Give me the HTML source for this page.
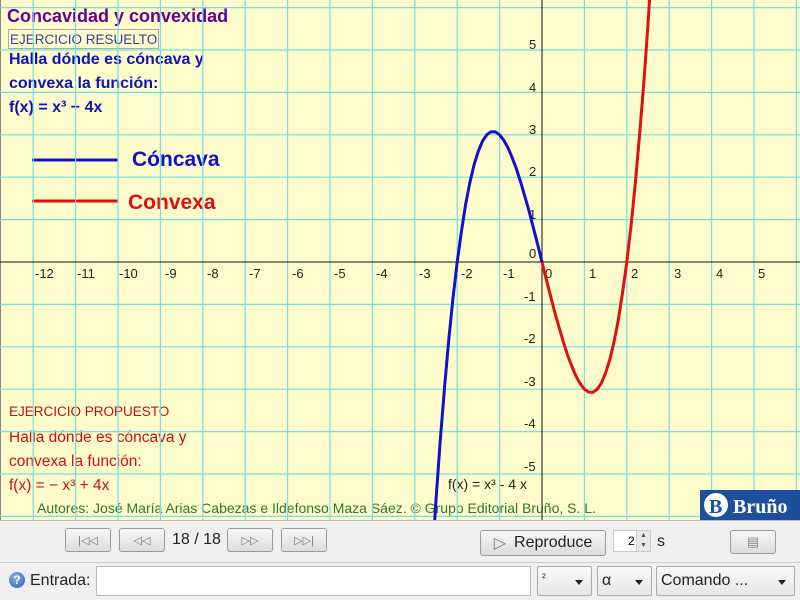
<!DOCTYPE html>
<html><head><meta charset="utf-8"><style>
*{margin:0;padding:0;box-sizing:border-box}
body{width:800px;height:600px;overflow:hidden;background:#f0f0f0;font-family:"Liberation Sans",sans-serif;position:relative}
.btn{position:absolute;height:24px;border:1px solid #9a9a9a;border-radius:3px;background:linear-gradient(#f8f8f8,#dcdcdc);font-size:15px;color:#222;display:flex;align-items:center;justify-content:center}
.sel{position:absolute;top:566px;height:30px;border:1px solid #aaa;border-radius:2px;background:linear-gradient(#fafafa,#e6e6e6);font-size:16px;color:#222;padding-left:4px;display:flex;align-items:center}
.sel:after{content:"";position:absolute;right:8px;top:13px;border:4px solid transparent;border-top:5px solid #222}
</style></head><body>
<svg width="800" height="520" style="position:absolute;left:0;top:0" font-family="Liberation Sans, sans-serif">
<rect width="800" height="520" fill="#fffccc"/>
<line x1="0.5" y1="0" x2="0.5" y2="520" stroke="#888"/>
<text x="7" y="22" font-size="18" font-weight="bold" fill="#660099">Concavidad y convexidad</text>
<rect x="8.5" y="29.5" width="150" height="19" fill="none" stroke="#aaa"/>
<text x="10" y="44" font-size="13.5" fill="#3a3aa0">EJERCICIO RESUELTO</text>
<g font-size="16" font-weight="bold" fill="#1111bb">
<text x="9" y="64">Halla dónde es cóncava y</text>
<text x="9" y="88">convexa la función:</text>
<text x="9" y="112">f(x) = x³ − 4x</text>
</g>
<line x1="32" y1="160" x2="118" y2="160" stroke="#1111cc" stroke-width="3"/>
<text x="132" y="166" font-size="21" font-weight="bold" fill="#1111cc">Cóncava</text>
<line x1="32" y1="201" x2="118" y2="201" stroke="#dd1111" stroke-width="3"/>
<text x="128" y="209" font-size="21" font-weight="bold" fill="#dd1111">Convexa</text>
<text x="9" y="416" font-size="13.5" fill="#bb1111">EJERCICIO PROPUESTO</text>
<g font-size="15.5" fill="#cc1111">
<text x="9" y="442">Halla dónde es cóncava y</text>
<text x="9" y="466">convexa la función:</text>
<text x="9" y="490">f(x) = − x³ + 4x</text>
</g>
<text x="37" y="513" font-size="14" fill="#2a7a2a">Autores: José María Arias Cabezas e Ildefonso Maza Sáez. © Grupo Editorial Bruño, S. L.</text>
<text x="448" y="489" font-size="14" fill="#222">f(x) = x³ - 4 x</text>
<g stroke="#70e0e0" stroke-width="1.2">
<path d="M33.2 0V520M75.6 0V520M118 0V520M160.4 0V520M202.8 0V520M245.2 0V520M287.6 0V520M330 0V520M372.4 0V520M414.8 0V520M457.2 0V520M499.6 0V520M584.4 0V520M626.8 0V520M669.2 0V520M711.6 0V520M754 0V520M796.4 0V520"/>
<path d="M0 7.6H800M0 50H800M0 92.4H800M0 134.8H800M0 177.2H800M0 219.6H800M0 304.4H800M0 346.8H800M0 389.2H800M0 431.6H800M0 474H800M0 516.4H800"/>
</g>
<line x1="0" y1="262" x2="800" y2="262" stroke="#111"/>
<line x1="542" y1="0" x2="542" y2="520" stroke="#111"/>
<g font-size="13" fill="#222">
<text x="35" y="278">-12</text><text x="77" y="278">-11</text><text x="119" y="278">-10</text><text x="165" y="278">-9</text><text x="207" y="278">-8</text><text x="249" y="278">-7</text><text x="292" y="278">-6</text><text x="334" y="278">-5</text><text x="376" y="278">-4</text><text x="419" y="278">-3</text><text x="461" y="278">-2</text><text x="503" y="278">-1</text><text x="545" y="278">0</text><text x="589" y="278">1</text><text x="631" y="278">2</text><text x="674" y="278">3</text><text x="716" y="278">4</text><text x="758" y="278">5</text>
<text x="529" y="49">5</text><text x="529" y="92">4</text><text x="529" y="134">3</text><text x="529" y="176">2</text><text x="529" y="219">1</text><text x="529" y="258">0</text>
<text x="524" y="301">-1</text><text x="524" y="343">-2</text><text x="524" y="386">-3</text><text x="524" y="428">-4</text><text x="524" y="471">-5</text>
</g>
<polyline fill="none" stroke="#1111cc" stroke-width="3" stroke-linejoin="round" points="431.8,566.3 436,500 440.2,441.1 444.5,388 448.7,340.4 453,298 457.2,262 461.5,231 465.7,204 470,182 474.2,164.3 478.4,151 482.6,140.9 486.9,134.6 491.1,131.7 495.4,131.9 499.6,134.8 503.9,140.5 508.1,148 512.3,158 516.6,169.4 520.8,182.5 525,196.9 529.3,212 533.5,228.4 537.8,245 542,262"/>
<polyline fill="none" stroke="#dd1111" stroke-width="3" stroke-linejoin="round" points="542,262 546.2,279 550.5,295.6 554.7,312 559,327.1 563.2,341.5 567.4,354.6 571.7,366 575.9,376 580.1,383.5 584.4,389.2 588.6,392.1 592.9,392.3 597.1,389.4 601.4,383.1 605.6,373 609.8,359.7 614,342 618.3,320 622.5,293 626.8,262 631,226 635.3,183.6 639.5,136 643.8,82.9 648,24 652.2,-42.3"/>
<rect x="700" y="490" width="100" height="30" fill="#1d4f9a"/>
<circle cx="716" cy="505" r="12" fill="#fff"/>
<text x="709" y="513" font-size="20" font-weight="bold" fill="#1d4f9a" font-family="Liberation Serif, serif">B</text>
<text x="733" y="513" font-size="20" font-weight="bold" fill="#fff" font-family="Liberation Serif, serif">Bruño</text>
</svg>
<div style="position:absolute;top:520px;left:0;width:800px;height:1px;background:#bbb"></div>
<div style="position:absolute;top:562px;left:0;width:800px;height:1px;background:#ccc"></div>
<div class="btn" style="left:65px;top:528px;width:46px;font-size:11px;color:#777">|◁◁</div>
<div class="btn" style="left:119px;top:528px;width:46px;font-size:11px;color:#777">◁◁</div>
<div style="position:absolute;left:172px;top:531px;font-size:16px;color:#222">18 / 18</div>
<div class="btn" style="left:227px;top:528px;width:46px;font-size:11px;color:#777">▷▷</div>
<div class="btn" style="left:281px;top:528px;width:46px;font-size:11px;color:#777">▷▷|</div>
<div class="btn" style="left:480px;top:530px;width:126px;height:26px;font-size:16px"><span style="color:#777;margin-right:8px">▷</span>Reproduce</div>
<div style="position:absolute;left:613px;top:530px;width:38px;height:22px;background:#fff;border:1px solid #ccc;font-size:12px;padding:3px 0 0 14px">2</div>
<div style="position:absolute;left:636px;top:531px;width:14px;height:20px;background:#e8e8e8;border-left:1px solid #ccc;font-size:7px;color:#557;text-align:center;line-height:10px">▲<br>▼</div>
<div style="position:absolute;left:657px;top:533px;font-size:16px;color:#222">s</div>
<div class="btn" style="left:730px;top:530px;width:46px;font-size:13px;color:#888">▤</div>
<div style="position:absolute;left:9px;top:572px;width:16px;height:16px;border-radius:50%;background:radial-gradient(circle at 40% 35%,#8ab0e8,#2b5ca8);color:#fff;font-size:12px;font-weight:bold;text-align:center;line-height:16px">?</div>
<div style="position:absolute;left:30px;top:572px;font-size:16px;color:#222">Entrada:</div>
<div style="position:absolute;left:96px;top:566px;width:435px;height:30px;background:#fff;border:1px solid #bbb"></div>
<div class="sel" style="left:537px;width:55px;font-size:11px;align-items:flex-start;padding-top:5px">²</div>
<div class="sel" style="left:597px;width:55px">α</div>
<div class="sel" style="left:656px;width:139px">Comando ...</div>
</body></html>
